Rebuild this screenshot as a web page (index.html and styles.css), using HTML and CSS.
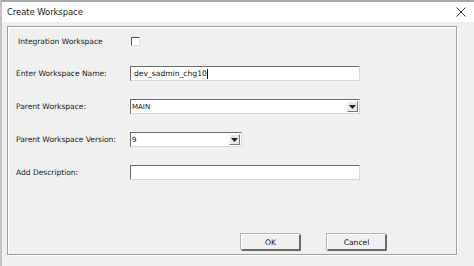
FILE: index.html
```html
<!DOCTYPE html>
<html>
<head>
<meta charset="utf-8">
<link rel="stylesheet" href="styles.css">
</head>
<body>
<div class="window">
  <div class="titlebar">
    <span class="title">Create Workspace</span>
    <svg class="close" width="10" height="10" viewBox="0 0 10 10"><path d="M0.5 0.5 L9.5 9.5 M9.5 0.5 L0.5 9.5" stroke="#333" stroke-width="1"/></svg>
  </div>
  <div class="body">
    <div class="group">
      <div class="form">
        <label class="lbl lbl-first">Integration Workspace</label>
        <div class="cell"><span class="checkbox"></span></div>
        <label class="lbl">Enter Workspace Name:</label>
        <div class="cell"><div class="field wide">dev_sadmin_chg10<span class="caret"></span></div></div>
        <label class="lbl">Parent Workspace:</label>
        <div class="cell"><div class="field wide select"><span class="val">MAIN</span><span class="arrow"><svg width="7" height="4" viewBox="0 0 7 4"><path d="M0 0 H7 L3.5 4 Z" fill="#222"/></svg></span></div></div>
        <label class="lbl">Parent Workspace Version:</label>
        <div class="cell"><div class="field short select"><span class="val">9</span><span class="arrow"><svg width="7" height="4" viewBox="0 0 7 4"><path d="M0 0 H7 L3.5 4 Z" fill="#222"/></svg></span></div></div>
        <label class="lbl">Add Description:</label>
        <div class="cell"><div class="field wide"></div></div>
      </div>
      <div class="buttons">
        <button class="btn">OK</button>
        <button class="btn">Cancel</button>
      </div>
    </div>
  </div>
</div>
</body>
</html>
```

FILE: styles.css
```css
html, body {
  margin: 0;
  padding: 0;
}
body {
  width: 474px;
  height: 266px;
  overflow: hidden;
  font-family: "DejaVu Sans", "Liberation Sans", sans-serif;
  background: #f0f0f0;
}
.window {
  width: 474px;
  height: 266px;
  box-sizing: border-box;
  border-top: 2px solid #a9a9a9;
  border-left: 2px solid #c4c4c4;
  display: flex;
  flex-direction: column;
  background: #f0f0f0;
}
.titlebar {
  height: 20px;
  background: #ffffff;
  display: flex;
  align-items: center;
  justify-content: space-between;
  padding: 0 8px 0 5px;
  flex: none;
}
.title {
  font-size: 8.5px;
  color: #1a1a1a;
  letter-spacing: -0.1px;
}
.close {
  display: block;
}
.body {
  flex: 1;
  padding: 4px 17px 11px 5px;
  display: flex;
}
.group {
  flex: 1;
  border: 1px solid #a0a0a0;
  box-shadow: inset 1px 1px 0 #ffffff, 1px 1px 0 #ffffff;
  display: flex;
  flex-direction: column;
  padding: 0 0 3px 0;
}
.form {
  display: grid;
  grid-template-columns: 114px 1fr;
  grid-template-rows: 13px 15px 15px 15px 15px;
  row-gap: 18px;
  padding: 8px 0 0 8px;
  align-items: center;
}
.lbl {
  font-size: 7.6px;
  color: #222;
  letter-spacing: -0.05px;
  line-height: 13px;
}
.lbl-first {
  padding-left: 2px;
}
.cell {
  display: flex;
  align-items: center;
}
.checkbox {
  width: 9px;
  height: 9px;
  margin-left: 1px;
  box-sizing: border-box;
  border-top: 1px solid #5a5a5a;
  border-left: 1px solid #5a5a5a;
  border-right: 1px solid #e0e0e0;
  border-bottom: 1px solid #e0e0e0;
  background: #fff;
}
.field {
  height: 15px;
  box-sizing: border-box;
  background: #ffffff;
  border-top: 1px solid #6d6d6d;
  border-left: 1px solid #6d6d6d;
  border-right: 1px solid #d8d8d8;
  border-bottom: 1px solid #d8d8d8;
  font-size: 7.6px;
  color: #111;
  padding-left: 3px;
  display: flex;
  align-items: center;
}
.wide {
  width: 230px;
}
.short {
  width: 112px;
}
.caret {
  width: 1px;
  height: 10px;
  background: #111;
  margin-left: 0.5px;
}
.select {
  padding-left: 1px;
  justify-content: space-between;
}
.val {
  font-size: 7px;
}
.arrow {
  width: 11px;
  height: 11px;
  box-sizing: border-box;
  background: #e8e8e8;
  border-right: 1px solid #7a7a7a;
  border-bottom: 1px solid #7a7a7a;
  border-top: 1px solid #fafafa;
  border-left: 1px solid #fafafa;
  display: flex;
  align-items: center;
  justify-content: center;
  margin-right: 1px;
}
.arrow svg {
  display: block;
}
.buttons {
  margin-top: auto;
  display: flex;
  justify-content: flex-end;
  gap: 26px;
  padding-right: 69px;
}
.btn {
  width: 60px;
  height: 17px;
  box-sizing: border-box;
  background: #f0f0f0;
  border-top: 1px solid #ffffff;
  border-left: 1px solid #ffffff;
  border-right: 2px solid #6a6a6a;
  border-bottom: 2px solid #6a6a6a;
  box-shadow: -1px -1px 0 #b5b5b5;
  font-family: "DejaVu Sans", "Liberation Sans", sans-serif;
  font-size: 7.6px;
  color: #111;
  padding: 0;
}
```
